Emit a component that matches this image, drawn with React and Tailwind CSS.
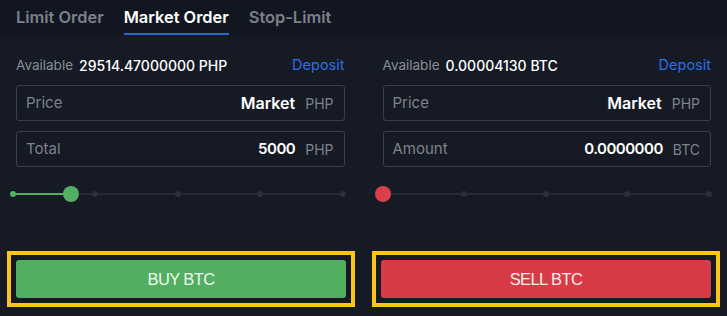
import React from 'react';

const font = { fontFamily: 'Inter, "Noto Sans", sans-serif' };

const Field = ({ label, value, unit, numeric }) => (
  <div className="flex h-[36px] items-center rounded-[3px] border border-[#3a3f4b] pl-[9px] pr-[10px]">
    <span className="flex-1 text-[15px] text-[#7d828c]">{label}</span>
    {numeric ? (
      <span className="text-[15px] font-semibold tracking-[-0.5px] text-white">{value}</span>
    ) : (
      <span className="text-[16px] font-semibold text-white">{value}</span>
    )}
    <span className="ml-[10px] text-[14px] text-[#7d828c]">{unit}</span>
  </div>
);

const Slider = ({ pct, color, left }) => {
  const stops = [0, 25, 50, 75, 100];
  return (
    <div className="relative h-[20px]" style={{ marginLeft: left, marginRight: 2 }}>
      <div className="absolute left-0 right-0 top-[9px] h-[2px] bg-[#242934]" />
      <div className="absolute left-0 top-[9px] h-[2px]" style={{ width: `${pct}%`, background: color }} />
      {stops.map(s => (
        <div
          key={s}
          className="absolute top-[7px] h-[6px] w-[6px] -translate-x-1/2 rounded-full"
          style={{ left: `${s}%`, background: s <= pct ? color : '#2a2f3a' }}
        />
      ))}
      <div
        className="absolute top-[2px] h-[16px] w-[16px] -translate-x-1/2 rounded-full"
        style={{ left: `${pct}%`, background: color }}
      />
    </div>
  );
};

const Column = ({ avail, unit, second, secondValue, secondUnit, slider }) => (
  <div className="flex flex-col">
    <div className="flex h-[20px] items-center">
      <span className="text-[13.5px] text-[#8a8f99]">Available</span>
      <span className="ml-[6px] text-[14px] font-medium text-white">{avail} {unit}</span>
      <span className="ml-auto text-[14.5px] text-[#2f6ee6]">Deposit</span>
    </div>
    <div className="mt-[10px] flex flex-col gap-[10px]">
      <Field label="Price" value="Market" unit="PHP" />
      <Field label={second} value={secondValue} unit={secondUnit} numeric />
    </div>
    <div className="mt-[17px]">{slider}</div>
  </div>
);

const btnFont = { fontFamily: '"Liberation Sans", Arial, sans-serif' };

const App = () => {
  return (
    <div className="h-[316px] w-[727px] bg-[#151a24]" style={font}>
      <div className="flex h-[35px] gap-[20px] bg-[#121620] px-[16px] text-[16.4px] font-semibold">
        <div className="pt-[5px] text-[#7b808a]">Limit Order</div>
        <div className="border-b-2 border-[#2f66c9] pt-[5px] text-white">Market Order</div>
        <div className="pt-[5px] text-[#7b808a]">Stop-Limit</div>
      </div>

      <div className="grid grid-cols-2 gap-[38px] px-[16px] pt-[20px]">
        <Column
          avail="29514.47000000"
          unit="PHP"
          second="Total"
          secondValue="5000"
          secondUnit="PHP"
          slider={<Slider pct={17.7} color="#52b062" left={-3} />}
        />
        <Column
          avail="0.00004130"
          unit="BTC"
          second="Amount"
          secondValue="0.0000000"
          secondUnit="BTC"
          slider={<Slider pct={0} color="#d9404a" left={0} />}
        />
      </div>

      <div className="mt-[47px] grid grid-cols-2 gap-[17px] px-[7px]">
        <div className="border-4 border-[#fcc51c] p-[5px]">
          <button
            className="flex h-[38px] w-full items-center justify-center rounded-[3px] bg-[#52ae61] text-[16.5px] tracking-[-0.6px] text-[#f0f8ef]"
            style={btnFont}
          >
            BUY BTC
          </button>
        </div>
        <div className="border-4 border-[#fcc51c] p-[5px]">
          <button
            className="flex h-[38px] w-full items-center justify-center rounded-[3px] bg-[#d73b45] text-[16.5px] tracking-[-0.6px] text-[#fbeeee]"
            style={btnFont}
          >
            SELL BTC
          </button>
        </div>
      </div>
    </div>
  );
};

export default App;
